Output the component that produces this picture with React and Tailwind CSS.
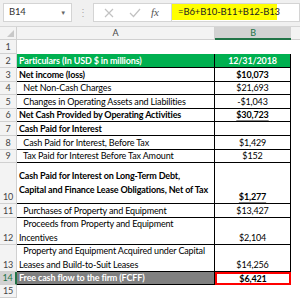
import React from 'react';

// rows of the sheet: h = row height, a = text in A, b = value in B
const rows = [
  { n: 1, h: 14, blank: true },
  { n: 2, h: 14, head: true, a: ['Particulars (In USD $ in millions)'], b: '12/31/2018' },
  { n: 3, h: 14, a: ['Net income (loss)'], b: '$10,073', bold: true },
  { n: 4, h: 13, a: ['  Net Non-Cash Charges'], b: '$21,693' },
  { n: 5, h: 14, a: ['  Changes in Operating Assets and Liabilities'], b: '-$1,043' },
  { n: 6, h: 13, a: ['Net Cash Provided by Operating Activities'], b: '$30,723', bold: true, under: true },
  { n: 7, h: 14, a: ['Cash Paid for Interest'], b: '', bold: true },
  { n: 8, h: 14, a: ['  Cash Paid for Interest, Before Tax'], b: '$1,429' },
  { n: 9, h: 13, a: ['  Tax Paid for Interest Before Tax Amount'], b: '$152' },
  {
    n: 10,
    h: 41,
    a: ['Cash Paid for Interest on Long-Term Debt,', 'Capital and Finance Lease Obligations, Net of Tax'],
    b: '$1,277',
    bold: true,
    under: true,
  },
  { n: 11, h: 14, a: ['  Purchases of Property and Equipment'], b: '$13,427' },
  { n: 12, h: 27, a: ['  Proceeds from Property and Equipment', 'Incentives'], b: '$2,104' },
  { n: 13, h: 27, a: ['  Property and Equipment Acquired under Capital', 'Leases and Build-to-Suit Leases'], b: '$14,256' },
  { n: 14, h: 13, total: true, a: ['Free cash flow to the firm (FCFF)'], b: '$6,421' },
  { n: 15, h: 13, blank: true },
];

function FormulaBar() {
  return (
    <div className="flex items-start h-[27px] bg-[#f0f0f0] border-b border-[#d6d6d6] pt-[3px]">
      <div className="ml-[3px] w-[69px] h-[19px] bg-white border border-[#d4d4d4] flex items-center justify-between px-[5px]">
        <span className="text-[9.5px] text-[#333]">B14</span>
        <span className="text-[6px] text-[#666]">▼</span>
      </div>
      <div className="w-[21px] h-[19px] flex items-center justify-center text-[10px] text-[#aaa]">⋮</div>
      <div className="w-[78px] h-[19px] bg-white border border-[#d4d4d4] border-r-0 flex items-center">
        <svg width="26" height="19" viewBox="0 0 26 19" className="ml-[2px]">
          <path d="M9 6 L17 14 M17 6 L9 14" stroke="#c2c2c2" strokeWidth="1.2" fill="none" />
        </svg>
        <svg width="26" height="19" viewBox="0 0 26 19">
          <path d="M8 10 L11.5 13.5 L18 6" stroke="#c2c2c2" strokeWidth="1.2" fill="none" />
        </svg>
        <span className="ml-[3px] text-[11px] italic text-[#555] font-['Liberation_Serif',serif]">fx</span>
      </div>
      <div className="flex-1 h-[19px] bg-white border border-[#d4d4d4] flex items-stretch">
        <div className="w-[105px] bg-[#ffff00] flex items-center pl-[6px] mb-[1px]">
          <span className="text-[9.5px] text-[#222] whitespace-nowrap tracking-[-0.1px]">=B6+B10-B11+B12-B13</span>
        </div>
      </div>
    </div>
  );
}

function ColumnHeader() {
  return (
    <div className="flex h-[13px] bg-[#f3f3f3] border-b border-[#d0d0d0]">
      <div className="w-[17px] border-r border-[#d0d0d0] relative">
        <div className="absolute right-[2px] bottom-[2px] w-0 h-0 border-l-[7px] border-l-transparent border-b-[7px] border-b-[#c8c8c8]" />
      </div>
      <div className="w-[198px] border-r border-[#d0d0d0] flex items-center justify-center text-[9px] text-[#444]">A</div>
      <div className="w-[76px] bg-[#d2d2d2] border-b-2 border-[#217346] flex items-center justify-center text-[9px] text-[#217346] -mb-px">
        B
      </div>
      <div className="flex-1" />
    </div>
  );
}

function Row({ r }) {
  const rowHeadCls = r.total
    ? 'bg-[#d2d2d2] border-r-2 border-r-[#217346] text-[#217346]'
    : 'bg-[#f3f3f3] border-r border-r-[#d0d0d0] text-[#444]';

  let aCls = 'bg-white text-black border-r border-b border-black';
  let bCls = 'bg-white text-black border-r border-b border-black';
  if (r.head) {
    aCls = 'bg-[#00b050] text-white font-bold border-r border-b border-black';
    bCls = 'bg-[#00b050] text-white font-bold border-r border-b border-black';
  }
  if (r.total) {
    aCls = 'bg-[#808080] text-white font-bold border-r border-b border-black';
    bCls = 'bg-white text-black font-bold border-2 border-[#ff0000]';
  }
  if (r.blank) {
    aCls = 'bg-white';
    bCls = 'bg-white';
  }

  return (
    <div className="flex" style={{ height: r.h }}>
      <div className={`w-[17px] flex items-end justify-center pb-[1px] text-[9px] leading-[11px] border-b border-b-[#d0d0d0] ${rowHeadCls}`}>
        {r.n}
      </div>
      <div className={`w-[198px] flex flex-col justify-center pl-[2px] leading-[14px] overflow-hidden ${aCls} ${r.bold ? 'font-bold' : ''}`}>
        {(r.a || []).map((t, i) => (
          <span key={i} className="whitespace-pre">{t}</span>
        ))}
      </div>
      <div
        className={`w-[76px] flex justify-center leading-[13px] ${r.head || r.total ? 'items-center' : 'items-end'} ${bCls} ${
          r.bold ? 'font-bold' : ''
        }`}
      >
        <span className={r.under ? 'underline decoration-[#888] underline-offset-2' : ''}>{r.b}</span>
      </div>
      <div className="flex-1 bg-white" />
    </div>
  );
}

export default function App() {
  return (
    <div className="w-[300px] h-[298px] overflow-hidden bg-white font-['Lato',sans-serif] text-[9px] tracking-[-0.15px]">
      <FormulaBar />
      <ColumnHeader />
      {rows.map((r) => (
        <Row key={r.n} r={r} />
      ))}
    </div>
  );
}
